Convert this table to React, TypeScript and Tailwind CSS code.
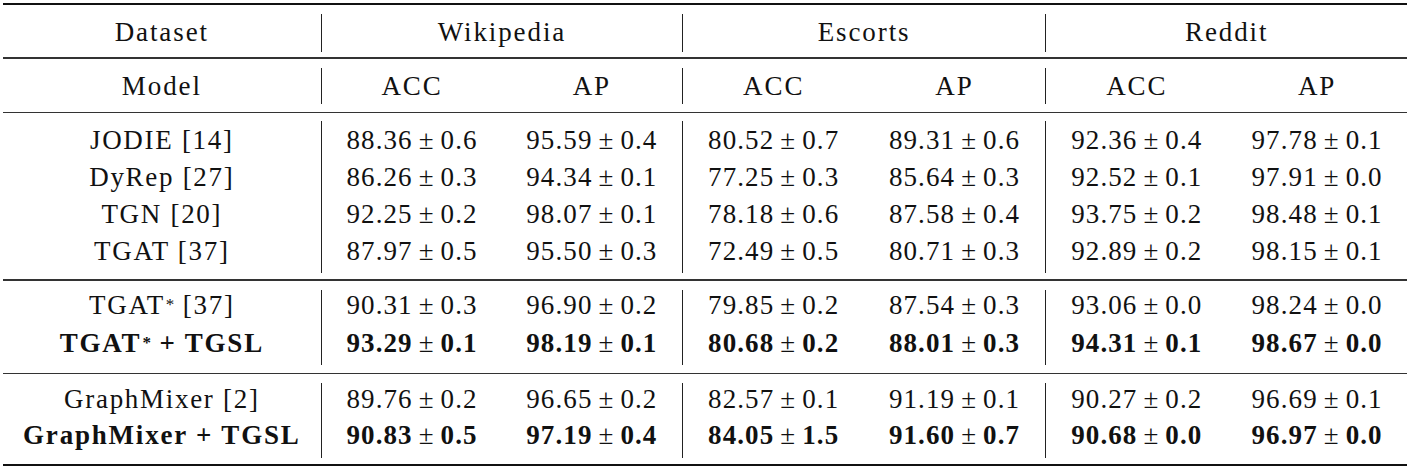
import React from "react";

type Row = { name: React.ReactNode; bold?: boolean; vals: string[] };

const star = <sup className="text-[17px] relative top-[-4px] tracking-normal ml-[1px]">*</sup>;

const groups: { rows: Row[]; pt: string; pb: string; rh: string; sepT: string; sepB: string }[] = [
  {
    pt: "pt-[9px]",
    pb: "pb-[9px]",
    rh: "h-[37px]",
    sepT: "mt-[8px]",
    sepB: "mb-[6px]",
    rows: [
      { name: "JODIE [14]", vals: ["88.36 ± 0.6", "95.59 ± 0.4", "80.52 ± 0.7", "89.31 ± 0.6", "92.36 ± 0.4", "97.78 ± 0.1"] },
      { name: "DyRep [27]", vals: ["86.26 ± 0.3", "94.34 ± 0.1", "77.25 ± 0.3", "85.64 ± 0.3", "92.52 ± 0.1", "97.91 ± 0.0"] },
      { name: "TGN [20]", vals: ["92.25 ± 0.2", "98.07 ± 0.1", "78.18 ± 0.6", "87.58 ± 0.4", "93.75 ± 0.2", "98.48 ± 0.1"] },
      { name: "TGAT [37]", vals: ["87.97 ± 0.5", "95.50 ± 0.3", "72.49 ± 0.5", "80.71 ± 0.3", "92.89 ± 0.2", "98.15 ± 0.1"] },
    ],
  },
  {
    pt: "pt-[6px]",
    pb: "pb-[10px]",
    rh: "h-[38px]",
    sepT: "mt-[9px]",
    sepB: "mb-[8px]",
    rows: [
      {
        name: <span>TGAT{star} [37]</span>,
        vals: ["90.31 ± 0.3", "96.90 ± 0.2", "79.85 ± 0.2", "87.54 ± 0.3", "93.06 ± 0.0", "98.24 ± 0.0"],
      },
      {
        name: <span>TGAT{star} + TGSL</span>,
        bold: true,
        vals: ["93.29 ± 0.1", "98.19 ± 0.1", "80.68 ± 0.2", "88.01 ± 0.3", "94.31 ± 0.1", "98.67 ± 0.0"],
      },
    ],
  },
  {
    pt: "pt-[7px]",
    pb: "pb-[11px]",
    rh: "h-[36px]",
    sepT: "mt-[9px]",
    sepB: "mb-[6px]",
    rows: [
      { name: "GraphMixer [2]", vals: ["89.76 ± 0.2", "96.65 ± 0.2", "82.57 ± 0.1", "91.19 ± 0.1", "90.27 ± 0.2", "96.69 ± 0.1"] },
      { name: "GraphMixer + TGSL", bold: true, vals: ["90.83 ± 0.5", "97.19 ± 0.4", "84.05 ± 1.5", "91.60 ± 0.7", "90.68 ± 0.0", "96.97 ± 0.0"] },
    ],
  },
];

const colW = ["w-[180px]", "w-[180px]", "w-[181px]", "w-[181px]", "w-[181px]", "w-[180px]"];

function Val({ v, bold }: { v: string; bold?: boolean }) {
  const [a, b] = v.split(" ± ");
  return (
    <span className="whitespace-nowrap tracking-[1.1px]">
      <span className={bold ? "font-bold" : ""}>{a}</span>
      <span className="mx-[6px] font-normal">±</span>
      <span className={bold ? "font-bold" : ""}>{b}</span>
    </span>
  );
}

function Sep({ t, b }: { t: string; b: string }) {
  return <div className={`w-[1.5px] bg-[#222] self-stretch ${t} ${b}`} />;
}

function HRule({ thick }: { thick?: boolean }) {
  return <div className={thick ? "h-[2px] bg-[#111]" : "h-[1.5px] bg-[#333]"} />;
}

const head = "flex items-center justify-center tracking-[1.9px]";

export default function App() {
  return (
    <div
      className="w-[1412px] h-[467px] bg-white text-[#111] text-[27px] leading-none"
      style={{ fontFamily: '"Liberation Serif", "Times New Roman", serif' }}
    >
      <div className="pt-[3px] pl-[3px] w-[1407px]">
        <HRule thick />
        {/* Dataset row */}
        <div className="flex h-[52px]">
          <div className={`w-[318px] pt-[2px] ${head}`}>Dataset</div>
          <Sep t="mt-[9px]" b="mb-[5px]" />
          <div className={`w-[360px] pt-[2px] ${head}`}>Wikipedia</div>
          <Sep t="mt-[9px]" b="mb-[5px]" />
          <div className={`w-[362px] pt-[2px] ${head}`}>Escorts</div>
          <Sep t="mt-[9px]" b="mb-[5px]" />
          <div className={`w-[361px] pt-[2px] ${head}`}>Reddit</div>
        </div>
        <HRule />
        {/* Model row */}
        <div className="flex h-[53px]">
          <div className={`w-[318px] pt-[3px] ${head}`}>Model</div>
          <Sep t="mt-[9px]" b="mb-[8px]" />
          <div className={`w-[180px] pt-[3px] ${head}`}>ACC</div>
          <div className={`w-[180px] pt-[3px] ${head}`}>AP</div>
          <Sep t="mt-[9px]" b="mb-[8px]" />
          <div className={`w-[181px] pt-[3px] ${head}`}>ACC</div>
          <div className={`w-[181px] pt-[3px] ${head}`}>AP</div>
          <Sep t="mt-[9px]" b="mb-[8px]" />
          <div className={`w-[181px] pt-[3px] ${head}`}>ACC</div>
          <div className={`w-[180px] pt-[3px] ${head}`}>AP</div>
        </div>
        {groups.map((g, gi) => (
          <React.Fragment key={gi}>
            <HRule />
            <div className="flex">
              <div className={`w-[318px] flex flex-col ${g.pt} ${g.pb}`}>
                {g.rows.map((r, ri) => (
                  <div
                    key={ri}
                    className={`${g.rh} flex items-center justify-center whitespace-nowrap ${r.bold ? "font-bold tracking-[1.8px]" : "tracking-[1.7px]"}`}
                  >
                    {r.name}
                  </div>
                ))}
              </div>
              {[0, 1, 2, 3, 4, 5].map((ci) => (
                <React.Fragment key={ci}>
                  {ci % 2 === 0 && <Sep t={g.sepT} b={g.sepB} />}
                  <div className={`${colW[ci]} flex flex-col ${g.pt} ${g.pb}`}>
                    {g.rows.map((r, ri) => (
                      <div key={ri} className={`${g.rh} flex items-center justify-center`}>
                        <Val v={r.vals[ci]} bold={r.bold} />
                      </div>
                    ))}
                  </div>
                </React.Fragment>
              ))}
            </div>
          </React.Fragment>
        ))}
        <HRule thick />
      </div>
    </div>
  );
}
